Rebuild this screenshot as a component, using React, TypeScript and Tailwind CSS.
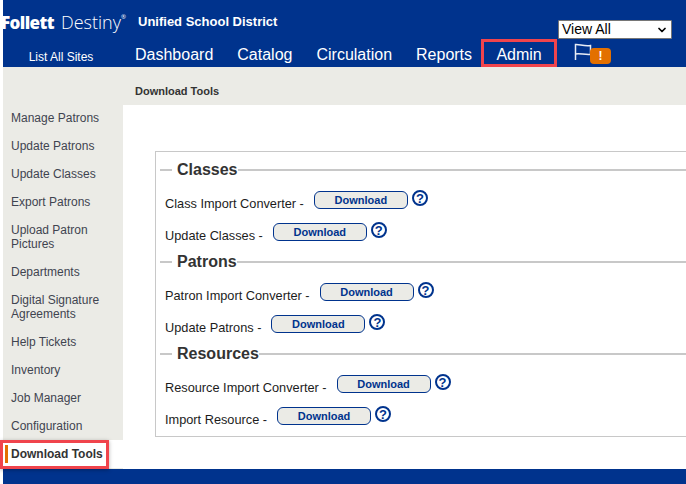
import { ChevronDown } from 'lucide-react';

const sideItems = [
	'Manage Patrons',
	'Update Patrons',
	'Update Classes',
	'Export Patrons',
	'Upload Patron Pictures',
	'Departments',
	'Digital Signature Agreements',
	'Help Tickets',
	'Inventory',
	'Job Manager',
	'Configuration',
];

const navItems = ['Dashboard', 'Catalog', 'Circulation', 'Reports'];

const sections = [
	{ title: 'Classes', rows: ['Class Import Converter -', 'Update Classes -'] },
	{ title: 'Patrons', rows: ['Patron Import Converter -', 'Update Patrons -'] },
	{ title: 'Resources', rows: ['Resource Import Converter -', 'Import Resource -'] },
];

function HelpIcon() {
	return (
		<span className="ml-[4px] -mt-[12px] flex h-[16px] w-[16px] items-center justify-center rounded-full border-2 border-[#00338d] text-[13px] font-bold leading-none text-[#00338d]">
			?
		</span>
	);
}

function FlagIcon() {
	return (
		<svg width="18" height="17" viewBox="0 0 18 17" fill="none" stroke="#e8edf5" strokeWidth="1.5">
			<path d="M1.5 17V1.5C5 1 10 3.5 16.5 2.5V11.5C10 12 6 10 1.5 11" />
		</svg>
	);
}

export default function App() {
	return (
		<div className="flex h-[484px] w-[686px] flex-col overflow-hidden bg-white pl-[3px] font-['Liberation_Sans',Arial,sans-serif]">
			<header className="h-[67px] shrink-0 bg-[#00338d] text-white">
				<div className="flex h-[39px] items-start">
					<div className="mt-[11px] flex w-[132px] items-baseline overflow-hidden whitespace-nowrap font-['Open_Sans',sans-serif] text-[17px] leading-[22px]">
						<span className="-ml-[2px] font-extrabold tracking-[-0.6px]">Follett</span>
						<span className="ml-[7px] text-[18px] font-light">Destiny</span>
						<span className="self-start text-[6px] leading-[12px]">®</span>
					</div>
					<div className="mt-[14px] flex-1 pl-[3px] text-[13px] font-bold leading-[16px]">Unified School District</div>
					<div className="mr-[14px] mt-[20px] flex h-[19px] w-[114px] items-center justify-between rounded-[1px] border border-[#767676] bg-white px-[3px] text-[14px] text-black">
						View All
						<ChevronDown size={12} strokeWidth={3.5} />
					</div>
				</div>
				<div className="flex h-[28px] items-center">
					<div className="w-[120px] pt-[8px] text-center text-[12px] leading-[14px]">
						<span className="relative left-[-2px]">List All Sites</span>
					</div>
					<nav className="flex items-center gap-[24px] pl-[12px] text-[16px]">
						{navItems.map(item => (
							<span key={item} className="pt-[4px]">{item}</span>
						))}
						<span className="-ml-[15px] flex h-[28px] w-[76px] items-center justify-center border-[3px] border-[#f0444c] pt-[4px]">Admin</span>
						<span className="-ml-[7px] flex items-start">
							<FlagIcon />
							<span className="-ml-[2px] mt-[5px] flex h-[16px] w-[21px] items-center justify-center rounded-[4px] bg-[#e37000] text-[12px] font-bold">!</span>
						</span>
					</nav>
				</div>
			</header>

			<div className="h-[38px] shrink-0 bg-[#ebebe6] pl-[132px] pt-[17px] text-[11px] font-bold leading-[14px] text-[#333333]">
				Download Tools
			</div>

			<div className="flex min-h-0 flex-1">
				<aside className="w-[120px] shrink-0 bg-[#ebebe6]">
					<div className="-mt-[1px]">
						{sideItems.map(item => (
							<div key={item} className="py-[7px] pl-[8px] pr-[6px] text-[12px] leading-[14px] text-[#3f4450]">
								{item}
							</div>
						))}
					</div>
					<div className="relative -ml-[3px] flex h-[28px] w-[123px] items-center bg-white pl-[5px]">
						<span className="h-[18px] w-[3px] bg-[#e37000]" />
						<span className="ml-[3px] text-[12px] font-bold leading-[14px] text-[#333333]">Download Tools</span>
						<span className="absolute left-0 top-0 h-[29px] w-[109px] border-[3px] border-[#f0444c] shadow-[0_1px_4px_rgba(0,0,0,0.3)]" />
					</div>
				</aside>

				<main className="min-w-0 flex-1 pl-[32px] pt-[46px]">
					<div className="h-[286px] w-[560px] border border-[#c8c8c8] pl-[4px] pt-[8px]">
						{sections.map(section => (
							<section key={section.title} className="h-[92px]">
								<div className="flex h-[20px] items-center">
									<span className="h-[2px] w-[12px] bg-[#c8c8c8]" />
									<span className="ml-[5px] text-[16px] font-bold leading-[20px] text-[#333333]">{section.title}</span>
									<span className="h-[2px] flex-1 bg-[#c8c8c8]" />
								</div>
								{section.rows.map(row => (
									<div key={row} className="flex h-[32px] items-center pl-[5px] pt-[16px] text-[12.75px] text-[#1c1c1c]">
										<span>{row}</span>
										<span className="ml-[10px] -mt-[8px] flex h-[18px] w-[94px] items-center justify-center rounded-[6px] border border-[#00338d] bg-[#ebebe6] text-[11px] font-bold text-[#00338d]">
											Download
										</span>
										<HelpIcon />
									</div>
								))}
							</section>
						))}
					</div>
				</main>
			</div>

			<footer className="h-[15px] shrink-0 bg-[#00338d]" />
		</div>
	);
}
